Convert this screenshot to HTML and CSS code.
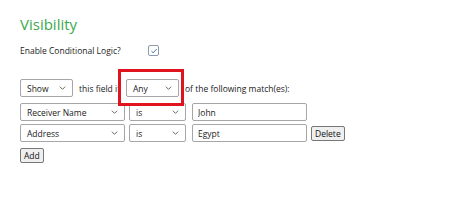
FILE: index.html
```html
<!DOCTYPE html>
<html lang="en">
<head>
  <meta charset="UTF-8">
  <title>Visibility</title>
  <link rel="stylesheet" href="styles.css">
</head>
<body>
  <div class="panel">
    <h2 class="title">Visibility</h2>

    <div class="enable-row">
      <span class="enable-label">Enable Conditional Logic?</span>
      <span class="check">
        <svg viewBox="0 0 10 10" width="8" height="8">
          <path d="M1.8 5.2 L4 7.3 L8.3 2.6" fill="none" stroke="#3d6ea8" stroke-width="1.2"/>
        </svg>
      </span>
    </div>

    <div class="logic-row">
      <div class="select w-show"><span>Show</span><svg class="chev" viewBox="0 0 10 6"><path d="M1 1 L5 5 L9 1" fill="none" stroke="#444" stroke-width="1.2"/></svg></div>
      <span class="text">this field if</span>
      <div class="highlight-wrap">
        <div class="select w-any"><span>Any</span><svg class="chev" viewBox="0 0 10 6"><path d="M1 1 L5 5 L9 1" fill="none" stroke="#444" stroke-width="1.2"/></svg></div>
        <div class="highlight"></div>
      </div>
      <span class="text">of the following match(es):</span>
    </div>

    <div class="rules">
      <div class="rule-row">
        <div class="select w-field"><span>Receiver Name</span><svg class="chev" viewBox="0 0 10 6"><path d="M1 1 L5 5 L9 1" fill="none" stroke="#444" stroke-width="1.2"/></svg></div>
        <div class="select w-op"><span>is</span><svg class="chev" viewBox="0 0 10 6"><path d="M1 1 L5 5 L9 1" fill="none" stroke="#444" stroke-width="1.2"/></svg></div>
        <input class="value" type="text" value="John">
      </div>

      <div class="rule-row">
        <div class="select w-field"><span>Address</span><svg class="chev" viewBox="0 0 10 6"><path d="M1 1 L5 5 L9 1" fill="none" stroke="#444" stroke-width="1.2"/></svg></div>
        <div class="select w-op"><span>is</span><svg class="chev" viewBox="0 0 10 6"><path d="M1 1 L5 5 L9 1" fill="none" stroke="#444" stroke-width="1.2"/></svg></div>
        <input class="value" type="text" value="Egypt">
        <button class="btn">Delete</button>
      </div>
    </div>

    <div class="add-row">
      <button class="btn">Add</button>
    </div>
  </div>
</body>
</html>
```

FILE: styles.css
```css
body {
  margin: 0;
  background: #fff;
  font-family: 'Open Sans', 'Noto Sans', sans-serif;
  color: #222;
}
.panel {
  padding: 13px 20px;
}
.title {
  margin: 0;
  font-size: 15px;
  font-weight: 400;
  color: #3aaa4e;
  line-height: 22px;
}
.enable-row {
  display: flex;
  align-items: center;
  margin-top: 10px;
  font-size: 8.5px;
}
.enable-label {
  width: 128px;
}
.check {
  width: 9px;
  height: 9px;
  border: 1px solid #8a9bb0;
  border-radius: 2px;
  display: flex;
  align-items: center;
  justify-content: center;
}
.logic-row {
  display: flex;
  align-items: center;
  margin-top: 23px;
  gap: 6px;
  font-size: 8.5px;
}
.rules {
  display: flex;
  flex-direction: column;
  gap: 3px;
  margin-top: 6px;
}
.rule-row {
  display: flex;
  align-items: center;
  gap: 4px;
  font-size: 8.5px;
}
.select {
  box-sizing: border-box;
  height: 18px;
  border: 1px solid #a6a6a6;
  border-radius: 2px;
  display: flex;
  align-items: center;
  justify-content: space-between;
  padding: 0 6px 0 6px;
  background: #fff;
}
.chev {
  width: 7px;
  height: 4px;
}
.w-show { width: 53px; }
.w-any { width: 53px; }
.w-field { width: 105px; }
.w-op { width: 57px; }
.highlight-wrap {
  position: relative;
}
.highlight {
  position: absolute;
  left: -8px;
  top: -10px;
  width: 60px;
  height: 31px;
  border: 3px solid #e0141e;
}
.value {
  box-sizing: border-box;
  width: 115px;
  height: 18px;
  border: 1px solid #a6a6a6;
  border-radius: 2px;
  padding: 0 5px;
  font-family: inherit;
  font-size: 8.5px;
  color: #222;
  margin-left: 2px;
}
.btn {
  font-family: inherit;
  font-size: 8.5px;
  padding: 1px 3px;
  height: 15px;
  line-height: 11px;
  border: 1px solid #777;
  border-radius: 2px;
  background: #efefef;
  color: #111;
}
.add-row {
  display: flex;
  margin-top: 6px;
}
```
